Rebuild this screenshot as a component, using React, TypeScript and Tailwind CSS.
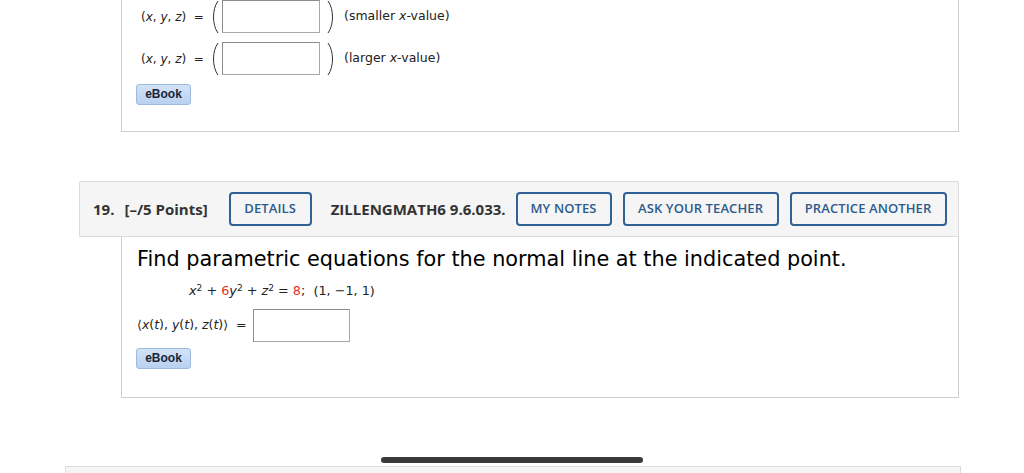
import React from "react";

const verdana = { fontFamily: '"DejaVu Sans", Verdana, sans-serif' };

function Paren({ right = false }: { right?: boolean }) {
  return (
    <svg width="9" height="34" viewBox="0 0 9 34" className="shrink-0">
      <path
        d={right ? "M2 1 C8 9 8 25 2 33" : "M7 1 C1 9 1 25 7 33"}
        fill="none"
        stroke="#333"
        strokeWidth="1"
      />
    </svg>
  );
}

function EBook() {
  return (
    <button className="w-[55px] h-[21px] rounded-[3px] border border-[#9fbadf] bg-gradient-to-b from-[#d3e3f7] to-[#b9d0ef] text-[12px] font-bold text-[#1a2638] [font-family:'Liberation_Sans',Arial,sans-serif] leading-none">
      eBook
    </button>
  );
}

function AnswerBox({ w = 98 }: { w?: number }) {
  return <div className="h-[33px] border border-[#a8a8a8] border-t-[#8d8d8d] border-l-[#8d8d8d] bg-white" style={{ width: w }} />;
}

function XyzRow({ note }: { note: string }) {
  return (
    <div className="flex items-center h-[33px] text-[12px] text-[#222]" style={verdana}>
      <span className="w-[70px]">
        (<i>x</i>, <i>y</i>, <i>z</i>) &nbsp;=
      </span>
      <Paren />
      <div className="ml-[2px]">
        <AnswerBox />
      </div>
      <div className="ml-[6px]">
        <Paren right />
      </div>
      <span className="ml-[9px] text-[12.5px]">
        ({note} <i>x</i>-value)
      </span>
    </div>
  );
}

function OutlineBtn({ children, w }: { children: React.ReactNode; w: number }) {
  return (
    <button
      className="h-[34px] rounded-[4px] border-2 border-[#2f6195] text-[#2d5b8c] text-[13px] font-semibold [font-family:'Open_Sans',sans-serif] tracking-[0.1px]"
      style={{ width: w }}
    >
      {children}
    </button>
  );
}

export default function App() {
  return (
    <div className="relative w-[1024px] h-[473px] overflow-hidden bg-white">
      {/* previous question, tail */}
      <div className="ml-[121px] w-[838px] h-[132px] border-x border-b border-[#cfcfcf] pl-[19px]">
        <XyzRow note="smaller" />
        <div className="mt-[9px]">
          <XyzRow note="larger" />
        </div>
        <div className="mt-[5px] -ml-[5px]">
          <EBook />
        </div>
      </div>

      {/* question 19 header */}
      <div className="mt-[49px] ml-[79px] w-[880px] h-[56px] flex items-center bg-[#f5f5f5] border border-[#dcdcdc] rounded-t-[2px] pl-[13px] [font-family:'Open_Sans',sans-serif] text-[#333]">
        <span className="text-[15px] font-bold">19.</span>
        <span className="ml-[10px] text-[15px] font-bold">[–/5 Points]</span>
        <div className="ml-[21px]">
          <OutlineBtn w={83}>DETAILS</OutlineBtn>
        </div>
        <span className="ml-[19px] text-[15px] font-bold">ZILLENGMATH6 9.6.033.</span>
        <div className="ml-[10px] flex gap-[11px]">
          <OutlineBtn w={96}>MY NOTES</OutlineBtn>
          <OutlineBtn w={156}>ASK YOUR TEACHER</OutlineBtn>
          <OutlineBtn w={157}>PRACTICE ANOTHER</OutlineBtn>
        </div>
      </div>

      {/* question 19 body */}
      <div className="ml-[121px] w-[838px] h-[161px] border-x border-b border-[#cfcfcf] pl-[15px] text-[#111]" style={verdana}>
        <p className="pt-[8px] text-[20.8px] leading-[28px] text-black">
          Find parametric equations for the normal line at the indicated point.
        </p>
        <p className="mt-[10px] ml-[52px] text-[12.8px] leading-[16px] text-[#222]">
          <i>x</i>
          <sup className="text-[9px]">2</sup> + <span className="text-[#e8321e]">6</span>
          <i>y</i>
          <sup className="text-[9px]">2</sup> + <i>z</i>
          <sup className="text-[9px]">2</sup> = <span className="text-[#e8321e]">8</span>;&nbsp; (1, −1, 1)
        </p>
        <div className="mt-[9px] flex items-center h-[34px] text-[12.5px] text-[#222]">
          <span>
            ⟨<i>x</i>(<i>t</i>), <i>y</i>(<i>t</i>), <i>z</i>(<i>t</i>)⟩ &nbsp;=
          </span>
          <div className="ml-[6px]">
            <AnswerBox w={97} />
          </div>
        </div>
        <div className="mt-[3px] -ml-[1px]">
          <EBook />
        </div>
      </div>

      {/* next question, top edge */}
      <div className="mt-[68px] ml-[65px] w-[896px] h-[20px] bg-[#f5f5f5] border border-[#dcdcdc]" />

      {/* home indicator */}
      <div className="absolute left-[381px] top-[457px] w-[262px] h-[6px] rounded-full bg-[#3a3a3a]" />
    </div>
  );
}
